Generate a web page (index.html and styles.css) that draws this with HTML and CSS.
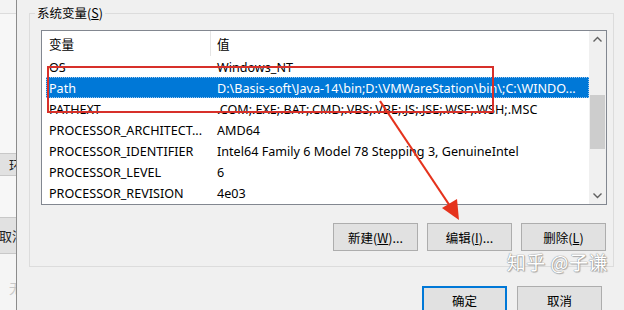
FILE: index.html
```html
<!DOCTYPE html>
<html lang="zh-CN">
<head>
    <meta charset="UTF-8">
    <meta name="viewport" content="width=device-width, initial-scale=1.0">
    <title>环境变量</title>
    <link rel="stylesheet" href="styles.css">
</head>
<body>
    <div class="screen">
        <!-- window behind the dialog, only its right edge shows -->
        <div class="behind">
            <div class="b-top"></div>
            <div class="b-blank"></div>
            <div class="b-btn b-env">环境</div>
            <div class="b-blank2"></div>
            <div class="b-btn b-cancel">取消</div>
            <div class="b-foot">无</div>
        </div>

        <div class="dialog">
            <fieldset class="group">
                <legend>系统变量(<u>S</u>)</legend>
                <div class="list">
                    <div class="table">
                        <div class="row head">
                            <div class="col1">变量</div>
                            <div class="col2">值</div>
                        </div>
                        <div class="row">
                            <div class="col1">OS</div>
                            <div class="col2">Windows_NT</div>
                        </div>
                        <div class="row selected">
                            <div class="col1">Path</div>
                            <div class="col2">D:\Basis-soft\Java-14\bin;D:\VMWareStation\bin\;C:\WINDO...</div>
                        </div>
                        <div class="row">
                            <div class="col1">PATHEXT</div>
                            <div class="col2">.COM;.EXE;.BAT;.CMD;.VBS;.VBE;.JS;.JSE;.WSF;.WSH;.MSC</div>
                        </div>
                        <div class="row">
                            <div class="col1">PROCESSOR_ARCHITECT...</div>
                            <div class="col2">AMD64</div>
                        </div>
                        <div class="row">
                            <div class="col1">PROCESSOR_IDENTIFIER</div>
                            <div class="col2">Intel64 Family 6 Model 78 Stepping 3, GenuineIntel</div>
                        </div>
                        <div class="row">
                            <div class="col1">PROCESSOR_LEVEL</div>
                            <div class="col2">6</div>
                        </div>
                        <div class="row">
                            <div class="col1">PROCESSOR_REVISION</div>
                            <div class="col2">4e03</div>
                        </div>
                    </div>
                    <div class="scrollbar">
                        <svg class="arrow-btn" width="17" height="17" viewBox="0 0 17 17"><polyline points="4.5,10.5 8.5,6.5 12.5,10.5" fill="none" stroke="#606060" stroke-width="1.4"/></svg>
                        <div class="track">
                            <div class="thumb"></div>
                        </div>
                        <svg class="arrow-btn" width="17" height="17" viewBox="0 0 17 17"><polyline points="4.5,6.5 8.5,10.5 12.5,6.5" fill="none" stroke="#606060" stroke-width="1.4"/></svg>
                    </div>
                </div>
                <div class="actions">
                    <button class="btn">新建(<u>W</u>)...</button>
                    <button class="btn">编辑(<u>I</u>)...</button>
                    <button class="btn">删除(<u>L</u>)</button>
                </div>
            </fieldset>
            <div class="footer">
                <button class="btn default">确定</button>
                <button class="btn">取消</button>
            </div>
        </div>

        <!-- annotations drawn over the screenshot -->
        <div class="mark"></div>
        <svg class="pointer" width="624" height="310" viewBox="0 0 624 310">
            <line x1="380" y1="101" x2="450" y2="206" stroke="#e5331d" stroke-width="2.2"/>
            <polygon points="459,220 442,208 457,199" fill="#e5331d"/>
        </svg>
        <div class="watermark">知乎 @子谦</div>
    </div>
</body>
</html>
```

FILE: styles.css
```css
*{
    margin: 0;
    padding: 0;
    box-sizing: border-box;
}
body{
    background: #f0f0f0;
    font-family: "Noto Sans", "Noto Sans CJK SC", sans-serif;
    font-size: 12.6px;
    color: #000;
    overflow: hidden;
}
.screen{
    position: relative;
    display: flex;
    width: 624px;
    height: 310px;
    overflow: hidden;
}

/* window behind */
.behind{
    width: 17px;
    flex-shrink: 0;
    display: flex;
    flex-direction: column;
    border-right: 1px solid #8c8c8c;
    background: #fbfbfb;
    overflow: hidden;
    font-family: "Noto Sans CJK SC", sans-serif;
    font-size: 13px;
    white-space: nowrap;
}
.b-top{
    height: 14px;
    background: #f3f3f3;
    border-bottom: 1px solid #dcdcdc;
}
.b-blank{
    height: 139px;
    background: #f7f7f7;
}
.b-btn{
    background: #e1e1e1;
    border-top: 1px solid #c8c8c8;
    border-bottom: 1px solid #c8c8c8;
    color: #222;
    overflow: hidden;
}
.b-env{
    height: 23px;
    line-height: 21px;
    padding-left: 9px;
}
.b-blank2{
    height: 41px;
    background: #f7f7f7;
}
.b-cancel{
    height: 37px;
    line-height: 35px;
    margin-left: -1px;
}
.b-foot{
    flex: 1;
    padding-left: 9px;
    padding-top: 24px;
    color: #c8c8c8;
    background: #f5f5f5;
    overflow: hidden;
}

/* main dialog */
.dialog{
    flex: 1;
    padding: 4px 0 0 12px;
}
.group{
    width: 585px;
    border: 1px solid #dcdcdc;
    padding: 8px 6px 15px 11px;
}
.group legend{
    margin-left: -6px;
    padding: 0 2px;
    line-height: 18px;
    font-family: "Noto Sans CJK SC", sans-serif;
    font-size: 12.5px;
}
.list{
    display: flex;
    height: 175px;
    background: #fff;
    border: 1px solid #828790;
}
.table{
    flex: 1;
    overflow: hidden;
    padding-left: 4px;
}
.row{
    display: flex;
    height: 21px;
    align-items: center;
    padding-top: 1px;
    white-space: nowrap;
}
.row.head{
    height: 25px;
    padding-top: 0;
}
.col1{
    width: 165px;
    flex-shrink: 0;
    padding-left: 3px;
    overflow: hidden;
}
.col2{
    flex: 1;
    padding-left: 6px;
    overflow: hidden;
}
.head .col1{
    border-right: 1px solid #e5e5e5;
    height: 100%;
    display: flex;
    align-items: center;
    font-family: "Noto Sans CJK SC", sans-serif;
}
.head .col2{
    font-family: "Noto Sans CJK SC", sans-serif;
}
.row.selected{
    background: #0078d7;
    color: #fff;
    outline: 1px dotted #9cc7ee;
    outline-offset: -1px;
}
.scrollbar{
    width: 17px;
    display: flex;
    flex-direction: column;
    background: #f0f0f0;
}
.arrow-btn{
    display: block;
    flex-shrink: 0;
}
.track{
    flex: 1;
    padding-top: 47px;
}
.thumb{
    height: 54px;
    margin: 0 1px;
    background: #cdcdcd;
}

.actions{
    display: flex;
    justify-content: flex-end;
    gap: 9px;
    margin-top: 18px;
    padding-right: 1px;
}
.btn{
    width: 85px;
    height: 28px;
    background: #e1e1e1;
    border: 1px solid #adadad;
    font-family: "Noto Sans CJK SC", sans-serif;
    font-size: 12.5px;
    color: #000;
}
.footer{
    display: flex;
    justify-content: flex-end;
    gap: 10px;
    margin-top: 19px;
    padding-right: 22px;
}
.btn.default{
    border: 2px solid #0078d7;
}

/* annotations */
.mark{
    position: absolute;
    left: 47px;
    top: 66px;
    width: 447px;
    height: 47px;
    border: 2px solid #d7302a;
}
.pointer{
    position: absolute;
    left: 0;
    top: 0;
    pointer-events: none;
}
.watermark{
    position: absolute;
    right: 16px;
    top: 248px;
    font-family: "Noto Sans CJK SC", sans-serif;
    font-size: 19px;
    color: #fff;
    text-shadow: 0 0 1px #8a8a8a, 0 0 1px #8a8a8a, 1px 1px 1px #b0b0b0;
    letter-spacing: 0.5px;
}
```
